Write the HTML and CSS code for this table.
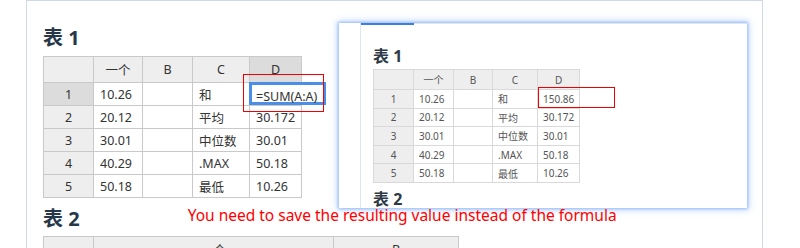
FILE: index.html
```html
<!DOCTYPE html>
<html lang="zh">
<head>
<meta charset="utf-8">
<title>表格公式</title>
<link rel="stylesheet" href="styles.css">
</head>
<body>
<div class="page">
  <h2 class="sheet-title">表 1</h2>
  <table class="grid">
    <colgroup>
      <col class="c-row"><col class="c-a"><col class="c-b"><col class="c-c"><col class="c-d">
    </colgroup>
    <thead>
      <tr><th></th><th>一个</th><th>B</th><th>C</th><th class="sel">D</th></tr>
    </thead>
    <tbody>
      <tr><th class="sel">1</th><td>10.26</td><td></td><td>和</td>
        <td class="active"><span class="editor">=SUM(A:A)</span><span class="mark mark-main"></span></td></tr>
      <tr><th>2</th><td>20.12</td><td></td><td>平均</td><td>30.172</td></tr>
      <tr><th>3</th><td>30.01</td><td></td><td>中位数</td><td>30.01</td></tr>
      <tr><th>4</th><td>40.29</td><td></td><td>.MAX</td><td>50.18</td></tr>
      <tr><th>5</th><td>50.18</td><td></td><td>最低</td><td>10.26</td></tr>
    </tbody>
  </table>

  <div class="second">
    <h2 class="sheet-title">表 2</h2>
    <p class="note">You need to save the resulting value instead of the formula</p>
  </div>

  <table class="grid grid-two">
    <colgroup><col class="c-row"><col class="c-wide"><col class="c-mid"></colgroup>
    <thead><tr><th></th><th>一个</th><th>B</th></tr></thead>
  </table>

  <div class="preview">
    <div class="preview-pane">
      <span class="tab-line"></span>
      <h3 class="mini-title">表 1</h3>
      <div class="mini-wrap">
        <table class="mini">
          <colgroup>
            <col class="m-row"><col class="m-a"><col class="m-b"><col class="m-c"><col class="m-d">
          </colgroup>
          <thead>
            <tr><th></th><th>一个</th><th>B</th><th>C</th><th>D</th></tr>
          </thead>
          <tbody>
            <tr><th>1</th><td>10.26</td><td></td><td>和</td><td>150.86</td></tr>
            <tr><th>2</th><td>20.12</td><td></td><td>平均</td><td>30.172</td></tr>
            <tr><th>3</th><td>30.01</td><td></td><td>中位数</td><td>30.01</td></tr>
            <tr><th>4</th><td>40.29</td><td></td><td>.MAX</td><td>50.18</td></tr>
            <tr><th>5</th><td>50.18</td><td></td><td>最低</td><td>10.26</td></tr>
          </tbody>
        </table>
        <span class="mark mark-mini"></span>
      </div>
      <h3 class="mini-title mini-title-two">表 2</h3>
    </div>
  </div>
</div>
</body>
</html>
```

FILE: styles.css
```css
html, body {
  margin: 0;
  padding: 0;
  background: #ffffff;
  overflow: hidden;
}

body {
  font-family: "Noto Sans", "Noto Sans CJK SC", sans-serif;
  color: #333333;
}

/* the article column with its thin side rules */
.page {
  position: relative;
  margin-left: 26px;
  width: 737px;
  height: 260px;
  border: 1px solid #cfdae6;
  border-bottom: none;
  padding: 24px 0 0 16px;
  box-sizing: border-box;
}

.sheet-title {
  margin: 0;
  font-size: 20px;
  line-height: 26px;
  font-weight: 700;
  color: #27384a;
  font-family: "Noto Sans", "Noto Sans CJK SC", sans-serif;
}

/* spreadsheet grid */
.grid {
  margin-top: 5px;
  border-collapse: collapse;
  table-layout: fixed;
  font-size: 12.5px;
}

.grid th,
.grid td {
  border: 1px solid #c9c9c9;
  padding: 0 6px;
  height: 22px;
  white-space: nowrap;
  overflow: visible;
}

.grid thead th {
  height: 25px;
  background: #eeeeee;
  font-weight: 400;
  text-align: center;
}

.grid tbody th {
  background: #eeeeee;
  font-weight: 400;
  text-align: center;
}

.grid th.sel {
  background: #dcdcdc;
}

.c-row { width: 50px; }
.c-a { width: 49px; }
.c-b { width: 50px; }
.c-c { width: 57px; }
.c-d { width: 50px; }
.c-wide { width: 240px; }
.c-mid { width: 125px; }

.grid td.active {
  position: relative;
}

/* in-cell editor spilling past the column */
.editor {
  position: absolute;
  left: -1px;
  top: -1px;
  height: 23px;
  padding: 0 6px 0 4px;
  line-height: 23px;
  border: 3px solid #4a8ee8;
  background: #ffffff;
  box-sizing: border-box;
  z-index: 2;
}

.mark {
  position: absolute;
  border: 1.5px solid #f00000;
  box-sizing: border-box;
  z-index: 3;
}

.mark-main {
  left: -7px;
  top: -9px;
  width: 81px;
  height: 38px;
}

.second {
  display: flex;
  align-items: flex-start;
  gap: 108px;
  margin-top: 8px;
}

.note {
  position: relative;
  z-index: 6;
  margin: -1px 0 0;
  font-size: 15.5px;
  line-height: 20px;
  color: #ff0000;
  white-space: nowrap;
}

.grid-two {
  margin-top: 4px;
}

/* floating preview of the saved sheet */
.preview {
  position: absolute;
  left: 312px;
  top: 22px;
  width: 408px;
  height: 185px;
  background: #ffffff;
  box-shadow: 0 0 3px 1px rgba(120, 170, 245, 0.75), 0 0 8px 2px rgba(150, 190, 250, 0.45);
  overflow: hidden;
  z-index: 5;
}

.preview-pane {
  position: relative;
  margin-left: 21px;
  height: 100%;
  border-left: 1px solid #dfe6ef;
  border-top: 1px solid #dfe6ef;
  padding-left: 12px;
  box-sizing: border-box;
}

.tab-line {
  position: absolute;
  left: 0;
  top: -1px;
  width: 53px;
  height: 2px;
  background: #3f7ddf;
}

.mini-title {
  margin: 0;
  padding-top: 21px;
  font-size: 16px;
  line-height: 22px;
  font-weight: 700;
  color: #2e3a46;
}

.mini-wrap {
  position: relative;
  margin-top: 2px;
  width: 260px;
}

.mini {
  border-collapse: collapse;
  table-layout: fixed;
  font-size: 10px;
  color: #555555;
}

.mini th,
.mini td {
  border: 1px solid #d9d9d9;
  padding: 0 5px;
  height: 17.6px;
  white-space: nowrap;
}

.mini thead th {
  height: 19px;
  background: #eeeeee;
  font-weight: 400;
  text-align: center;
}

.mini tbody th {
  background: #eeeeee;
  font-weight: 400;
  text-align: center;
}

.m-row { width: 40px; }
.m-a { width: 40px; }
.m-b { width: 39px; }
.m-c { width: 45px; }
.m-d { width: 41px; }

.mark-mini {
  left: 165px;
  top: 18px;
  width: 77px;
  height: 21px;
}

.mini-title-two {
  padding-top: 5px;
}
```
